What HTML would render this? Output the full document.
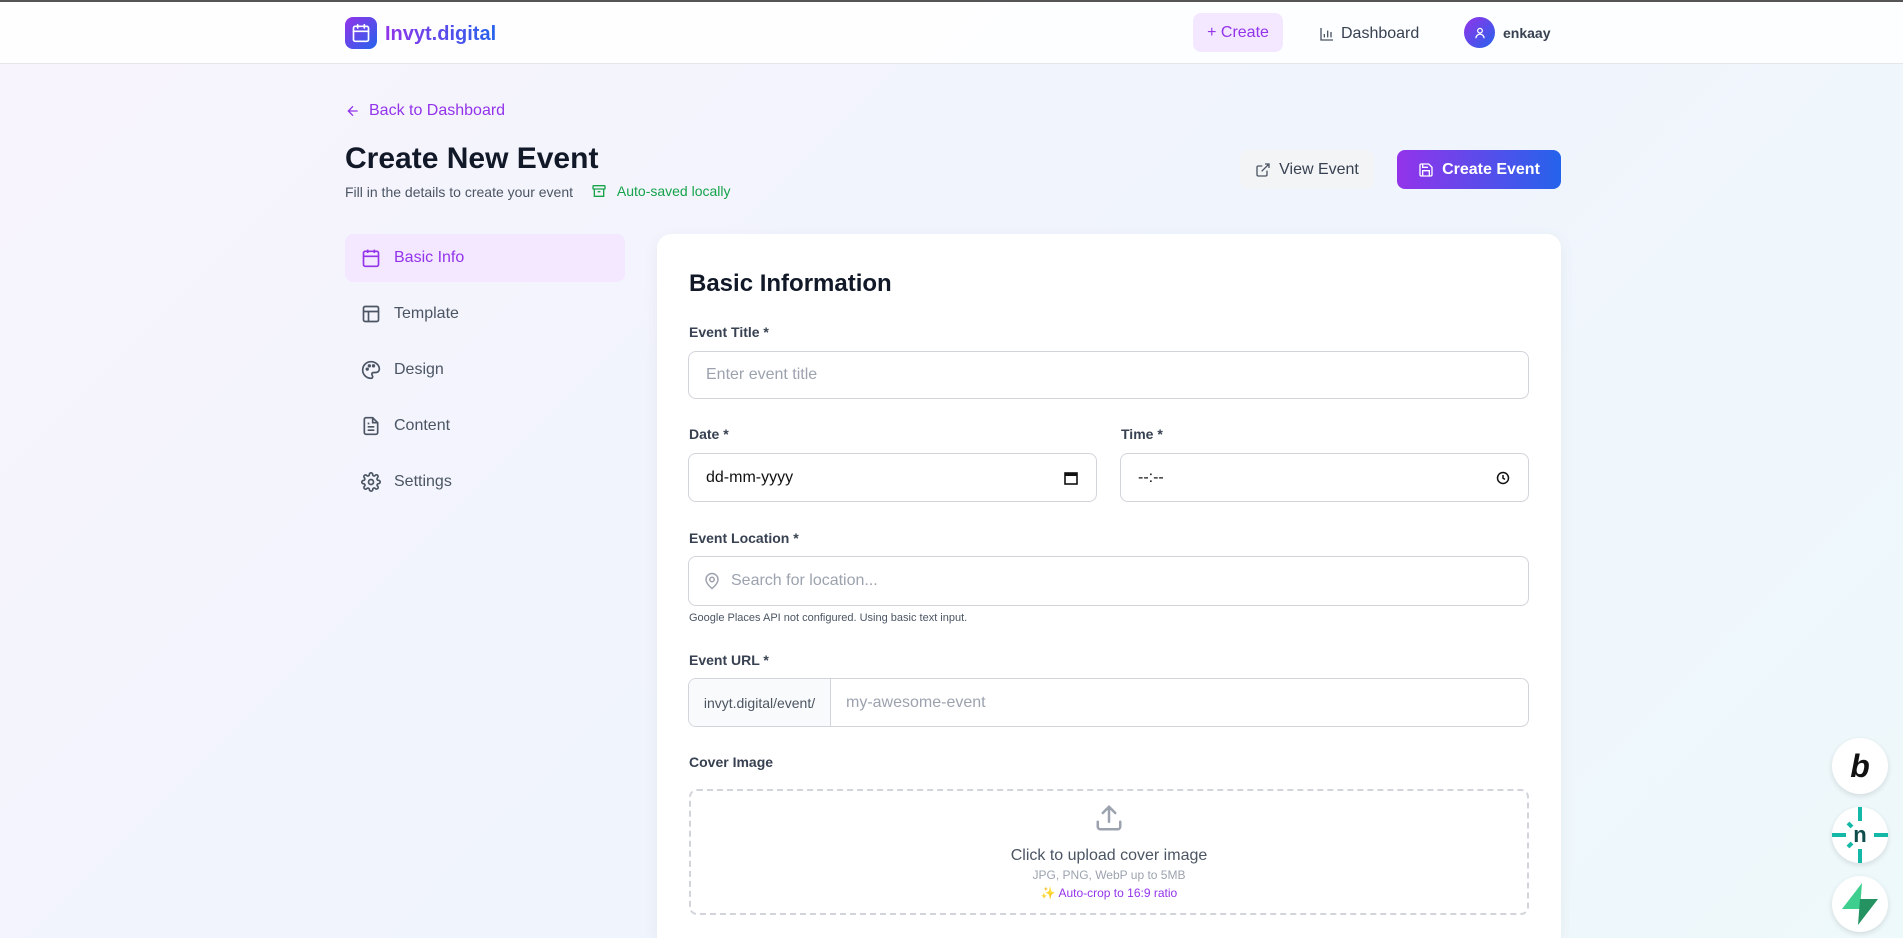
<!DOCTYPE html>
<html style="width:1903px;height:938px;overflow:hidden"><head><meta charset="utf-8"><style>
*{box-sizing:border-box;margin:0;padding:0}
body{width:1903px;height:938px;overflow:hidden;font-family:"Liberation Sans",sans-serif;background:linear-gradient(135deg,#f8f4fd 0%,#f0f4fd 50%,#eef9fb 100%);position:relative;color:#111827}
.abs{position:absolute}
.hdr{left:0;top:0;width:1903px;height:64px;background:rgba(255,255,255,.85);border-top:2px solid #555;border-bottom:1px solid #e5e7eb}
.logo{left:345px;top:17px;width:32px;height:32px;border-radius:8px;background:linear-gradient(135deg,#9333ea,#2563eb);display:flex;align-items:center;justify-content:center}
.brand{left:385px;top:23px;font-size:20px;font-weight:bold;background:linear-gradient(90deg,#9333ea,#2563eb);-webkit-background-clip:text;color:transparent}
.nav{font-size:16px;color:#374151;display:flex;align-items:center;gap:6px}
svg{display:block}
.label{font-size:14px;font-weight:bold;color:#374151}
.input{border:1px solid #d1d5db;border-radius:8px;background:#fff;font-size:16px;color:#9ca3af;display:flex;align-items:center;padding-left:17px}
.side{left:345px;width:280px;height:48px;border-radius:8px;display:flex;align-items:center;padding-left:16px;gap:13px;font-size:16px;color:#4b5563}
.badge{width:56px;height:56px;border-radius:50%;background:#fff;box-shadow:0 2px 6px rgba(0,0,0,.12);display:flex;align-items:center;justify-content:center}
</style></head><body>
<div class="abs hdr"></div>
<div class="abs logo"><svg width="20" height="20" viewBox="0 0 24 24" fill="none" stroke="#fff" stroke-width="2" stroke-linecap="round"><rect x="3" y="4" width="18" height="18" rx="2"/><path d="M16 2v4M8 2v4M3 10h18"/></svg></div>
<div class="abs brand">Invyt.digital</div>
<div class="abs nav" style="left:1193px;top:13px;width:90px;height:39px;background:#f3e8ff;border-radius:8px;color:#9333ea;justify-content:center">+ Create</div>
<div class="abs nav" style="left:1319px;top:25px"><svg width="16" height="16" viewBox="0 0 24 24" fill="none" stroke="#4b5563" stroke-width="2"><path d="M3 3v18h18M8 17v-5M13 17V7M18 17v-8"/></svg>Dashboard</div>
<div class="abs" style="left:1464px;top:17px;width:31px;height:31px;border-radius:50%;background:linear-gradient(135deg,#9333ea,#2563eb);display:flex;align-items:center;justify-content:center"><svg width="14" height="14" viewBox="0 0 24 24" fill="none" stroke="#fff" stroke-width="2.2"><circle cx="12" cy="8" r="4"/><path d="M5 21a7 7 0 0 1 14 0"/></svg></div>
<div class="abs" style="left:1503px;top:25px;font-size:14px;font-weight:bold;color:#374151">enkaay</div>

<div class="abs nav" style="left:345px;top:102px;color:#9333ea;font-size:16px;gap:8px"><svg width="16" height="16" viewBox="0 0 24 24" fill="none" stroke="#9333ea" stroke-width="2"><path d="M19 12H5M12 19l-7-7 7-7"/></svg>Back to Dashboard</div>
<div class="abs" style="left:345px;top:142px;font-size:30px;font-weight:bold;color:#111827">Create New Event</div>
<div class="abs" style="left:345px;top:184px;font-size:14px;color:#4b5563">Fill in the details to create your event</div>
<div class="abs nav" style="left:591px;top:183px;font-size:14px;color:#16a34a"><svg width="16" height="16" viewBox="0 0 24 24" fill="none" stroke="#16a34a" stroke-width="2"><rect x="3" y="4" width="18" height="5" rx="1"/><path d="M5 9v11h14V9M10 13h4"/></svg>&nbsp;Auto-saved locally</div>
<div class="abs nav" style="left:1240px;top:150px;width:134px;height:39px;background:#f3f4f6;border-radius:8px;justify-content:center;gap:8px"><svg width="16" height="16" viewBox="0 0 24 24" fill="none" stroke="#4b5563" stroke-width="2"><path d="M15 3h6v6M10 14 21 3M18 13v6a2 2 0 0 1-2 2H5a2 2 0 0 1-2-2V8a2 2 0 0 1 2-2h6"/></svg>View Event</div>
<div class="abs nav" style="left:1397px;top:150px;width:164px;height:39px;background:linear-gradient(90deg,#9333ea,#2563eb);border-radius:8px;justify-content:center;gap:8px;color:#fff;font-weight:bold"><svg width="16" height="16" viewBox="0 0 24 24" fill="none" stroke="#fff" stroke-width="2"><path d="M19 21H5a2 2 0 0 1-2-2V5a2 2 0 0 1 2-2h11l5 5v11a2 2 0 0 1-2 2z"/><path d="M17 21v-8H7v8M7 3v5h8"/></svg>Create Event</div>

<div class="abs side" style="top:234px;background:#f3e8ff;color:#9333ea"><svg width="20" height="20" viewBox="0 0 24 24" fill="none" stroke="#9333ea" stroke-width="2"><rect x="3" y="4" width="18" height="18" rx="2"/><path d="M16 2v4M8 2v4M3 10h18"/></svg>Basic Info</div>
<div class="abs side" style="top:290px"><svg width="20" height="20" viewBox="0 0 24 24" fill="none" stroke="#4b5563" stroke-width="2"><rect x="3" y="3" width="18" height="18" rx="2"/><path d="M3 9h18M9 21V9"/></svg>Template</div>
<div class="abs side" style="top:346px"><svg width="20" height="20" viewBox="0 0 24 24" fill="none" stroke="#4b5563" stroke-width="2"><path d="M12 2a10 10 0 0 0 0 20c1.5 0 2-1 2-2 0-1.5-1-1.5-1-3s1-2 2.5-2H18a4 4 0 0 0 4-4c0-5-4.5-9-10-9z"/><circle cx="7.5" cy="11" r="1"/><circle cx="10" cy="7" r="1"/><circle cx="15" cy="7" r="1"/></svg>Design</div>
<div class="abs side" style="top:402px"><svg width="20" height="20" viewBox="0 0 24 24" fill="none" stroke="#4b5563" stroke-width="2"><path d="M14 2H6a2 2 0 0 0-2 2v16a2 2 0 0 0 2 2h12a2 2 0 0 0 2-2V8z"/><path d="M14 2v6h6M16 13H8M16 17H8M10 9H8"/></svg>Content</div>
<div class="abs side" style="top:458px"><svg width="20" height="20" viewBox="0 0 24 24" fill="none" stroke="#4b5563" stroke-width="2"><circle cx="12" cy="12" r="3"/><path d="M19.4 15a1.7 1.7 0 0 0 .3 1.8l.1.1a2 2 0 1 1-2.8 2.8l-.1-.1a1.7 1.7 0 0 0-1.8-.3 1.7 1.7 0 0 0-1 1.5V21a2 2 0 1 1-4 0v-.1a1.7 1.7 0 0 0-1.1-1.5 1.7 1.7 0 0 0-1.8.3l-.1.1a2 2 0 1 1-2.8-2.8l.1-.1a1.7 1.7 0 0 0 .3-1.8 1.7 1.7 0 0 0-1.5-1H3a2 2 0 1 1 0-4h.1a1.7 1.7 0 0 0 1.5-1.1 1.7 1.7 0 0 0-.3-1.8l-.1-.1a2 2 0 1 1 2.8-2.8l.1.1a1.7 1.7 0 0 0 1.8.3H9a1.7 1.7 0 0 0 1-1.5V3a2 2 0 1 1 4 0v.1a1.7 1.7 0 0 0 1 1.5 1.7 1.7 0 0 0 1.8-.3l.1-.1a2 2 0 1 1 2.8 2.8l-.1.1a1.7 1.7 0 0 0-.3 1.8V9a1.7 1.7 0 0 0 1.5 1H21a2 2 0 1 1 0 4h-.1a1.7 1.7 0 0 0-1.5 1z"/></svg>Settings</div>

<div class="abs" style="left:657px;top:234px;width:904px;height:704px;background:#fff;border-radius:14px 14px 0 0;box-shadow:0 4px 16px rgba(0,0,0,.05)"></div>
<div class="abs" style="left:689px;top:270px;font-size:24px;font-weight:bold;color:#111827">Basic Information</div>
<div class="abs label" style="left:689px;top:324px">Event Title *</div>
<div class="abs input" style="left:688px;top:351px;width:841px;height:48px">Enter event title</div>
<div class="abs label" style="left:689px;top:426px">Date *</div>
<div class="abs input" style="left:688px;top:453px;width:409px;height:49px;color:#111;justify-content:space-between;padding-right:18px">dd-mm-yyyy<svg width="14" height="14" viewBox="0 0 14 14"><rect x="1" y="2" width="12" height="11" fill="none" stroke="#111" stroke-width="1.6"/><rect x="1" y="2" width="12" height="3" fill="#111"/></svg></div>
<div class="abs label" style="left:1121px;top:426px">Time *</div>
<div class="abs input" style="left:1120px;top:453px;width:409px;height:49px;color:#111;justify-content:space-between;padding-right:18px">--:--<svg width="14" height="14" viewBox="0 0 14 14" fill="none" stroke="#111" stroke-width="1.5"><circle cx="7" cy="7" r="5.5"/><path d="M7 4v3.2l2 1.2"/></svg></div>
<div class="abs label" style="left:689px;top:530px">Event Location *</div>
<div class="abs input" style="left:688px;top:556px;width:841px;height:50px;padding-left:14px;gap:10px"><svg width="18" height="18" viewBox="0 0 24 24" fill="none" stroke="#9ca3af" stroke-width="2"><path d="M20 10c0 6-8 12-8 12s-8-6-8-12a8 8 0 0 1 16 0z"/><circle cx="12" cy="10" r="3"/></svg>Search for location...</div>
<div class="abs" style="left:689px;top:612px;font-size:11px;color:#4b5563">Google Places API not configured. Using basic text input.</div>
<div class="abs label" style="left:689px;top:652px">Event URL *</div>
<div class="abs input" style="left:688px;top:678px;width:841px;height:49px;padding-left:0;overflow:hidden"><div style="width:142px;height:100%;background:#f9fafb;border-right:1px solid #d1d5db;display:flex;align-items:center;justify-content:center;font-size:14px;color:#4b5563">invyt.digital/event/</div><span style="margin-left:15px">my-awesome-event</span></div>
<div class="abs label" style="left:689px;top:754px">Cover Image</div>
<div class="abs" style="left:689px;top:789px;width:840px;height:126px;border:2px dashed #d1d5db;border-radius:8px;text-align:center">
<svg style="margin:12px auto 0" width="30" height="30" viewBox="0 0 24 24" fill="none" stroke="#9ca3af" stroke-width="2" stroke-linecap="round"><path d="M21 15v4a2 2 0 0 1-2 2H5a2 2 0 0 1-2-2v-4M17 8l-5-5-5 5M12 3v12"/></svg>
<div style="font-size:16px;color:#4b5563;margin-top:14px">Click to upload cover image</div>
<div style="font-size:12px;color:#9ca3af;margin-top:3px">JPG, PNG, WebP up to 5MB</div>
<div style="font-size:12px;color:#9333ea;margin-top:4px"><span style="color:#f59e0b">✨</span> Auto-crop to 16:9 ratio</div></div>

<div class="abs badge" style="left:1832px;top:738px;font-size:32px;font-weight:bold;font-style:italic;color:#111">b</div>
<div class="abs badge" style="left:1832px;top:807px"><svg width="56" height="56" viewBox="0 0 56 56"><path d="M28 0v14M28 42v14M0 28h14M42 28h14M16 16l4 4M16 40l4-4" stroke="#14b8a6" stroke-width="4"/><text x="28" y="35" text-anchor="middle" font-family="Liberation Sans" font-weight="bold" font-size="22" fill="#0f4c4c">n</text></svg></div>
<div class="abs badge" style="left:1832px;top:876px"><svg width="40" height="42" viewBox="0 0 40 42"><path d="M22 0 2 26h18z" fill="#3ecf8e"/><path d="M18 42 38 16H20z" fill="#249361"/></svg></div>
</body></html>
